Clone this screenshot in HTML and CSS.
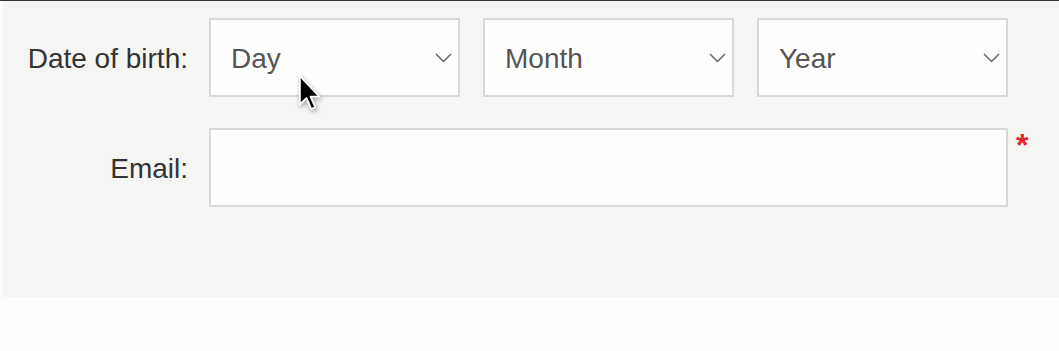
FILE: index.html
```html
<!DOCTYPE html>
<html lang="en">
<head>
    <meta charset="UTF-8">
    <meta name="viewport" content="width=device-width, initial-scale=1.0">
    <title>Sign up</title>
    <link rel="stylesheet" href="styles.css">
</head>
<body>
    <div class="panel">
        <form class="signup-form">
            <div class="form-row">
                <label class="form-label" for="dob-day">Date of birth:</label>
                <div class="select-wrap">
                    <select id="dob-day" class="form-select">
                        <option>Day</option>
                    </select>
                    <svg class="chevron" width="17" height="10" viewBox="0 0 17 10"><path d="M1 1 L8.5 8.5 L16 1" fill="none" stroke="#666" stroke-width="1.5"/></svg>
                </div>
                <div class="select-wrap">
                    <select id="dob-month" class="form-select">
                        <option>Month</option>
                    </select>
                    <svg class="chevron" width="17" height="10" viewBox="0 0 17 10"><path d="M1 1 L8.5 8.5 L16 1" fill="none" stroke="#666" stroke-width="1.5"/></svg>
                </div>
                <div class="select-wrap">
                    <select id="dob-year" class="form-select">
                        <option>Year</option>
                    </select>
                    <svg class="chevron" width="17" height="10" viewBox="0 0 17 10"><path d="M1 1 L8.5 8.5 L16 1" fill="none" stroke="#666" stroke-width="1.5"/></svg>
                </div>
            </div>
            <div class="form-row">
                <label class="form-label" for="email">Email:</label>
                <input type="email" id="email" class="form-input">
                <span class="required">*</span>
            </div>
        </form>
    </div>
    <!-- mouse pointer from the recording -->
    <svg class="pointer" width="24" height="37" viewBox="0 0 13 20">
        <path d="M1 1 L1 16.5 L4.6 13 L7.2 19 L9.4 18 L6.8 12.2 L11.6 12.2 Z" fill="#000" stroke="#fff" stroke-width="1" stroke-linejoin="round"/>
    </svg>
</body>
</html>
```

FILE: styles.css
```css
body {
    margin: 0;
    background-color: #fdfdfb;
    font-family: "Liberation Sans", Arial, sans-serif;
    border-top: 1px solid #333;
    position: relative;
    min-height: 350px;
}
.panel {
    margin-left: 3px;
    height: 296px;
    background-color: #f5f5f4;
    box-sizing: border-box;
    padding-top: 17px;
}
.signup-form {
    display: flex;
    flex-direction: column;
    gap: 31px;
}
.form-row {
    display: flex;
    align-items: center;
}
.form-label {
    width: 185px;
    margin-right: 21px;
    padding-top: 2px;
    text-align: right;
    font-size: 28px;
    color: #333;
}
.select-wrap {
    position: relative;
    width: 251px;
    height: 79px;
    margin-right: 23px;
}
.form-select {
    appearance: none;
    -webkit-appearance: none;
    width: 100%;
    height: 100%;
    margin: 0;
    padding: 2px 0 0 20px;
    border: 2px solid #d8d8d8;
    border-radius: 0;
    background-color: #fefefd;
    font-family: "Liberation Sans", Arial, sans-serif;
    font-size: 28px;
    color: #555;
}
.chevron {
    position: absolute;
    right: 8px;
    top: 35px;
}
.form-input {
    width: 799px;
    height: 79px;
    margin: 0;
    padding: 0 20px;
    box-sizing: border-box;
    border: 2px solid #d8d8d8;
    border-radius: 0;
    background-color: #fefefd;
    font-size: 28px;
}
.required {
    align-self: flex-start;
    margin: 1px 0 0 8px;
    font-size: 32px;
    font-weight: bold;
    line-height: 32px;
    color: #e0262c;
}
.pointer {
    position: absolute;
    left: 298px;
    top: 73px;
    filter: drop-shadow(1px 2px 2px rgba(0,0,0,0.35));
}
```
